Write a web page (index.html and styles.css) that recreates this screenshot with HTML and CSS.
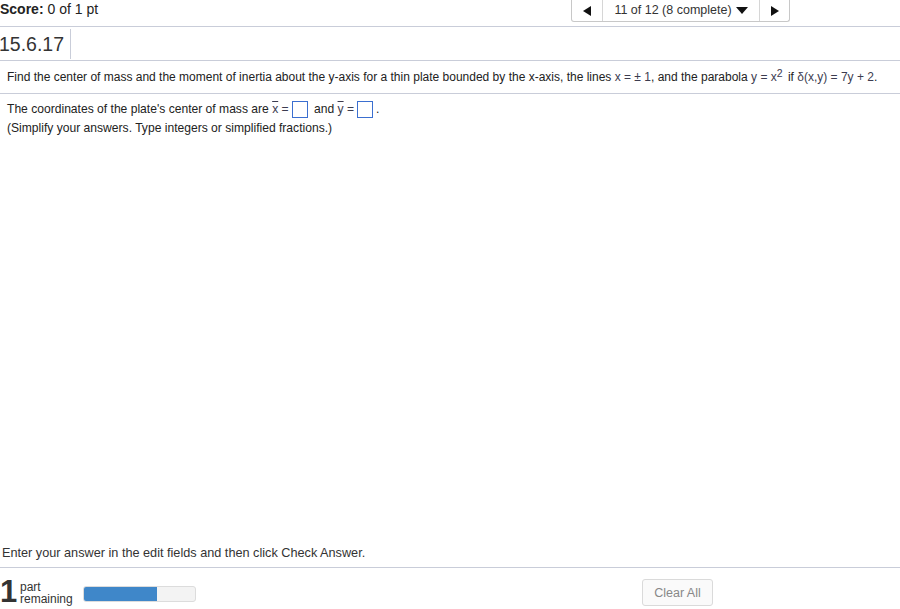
FILE: index.html
```html
<!DOCTYPE html>
<html>
<head>
<meta charset="utf-8">
<link rel="stylesheet" href="styles.css">
</head>
<body>
<div class="page">
  <div class="header">
    <div class="score"><b>Score:</b> 0 of 1 pt</div>
    <div class="nav">
      <div class="navbtn prev"><span class="tri-left"></span></div>
      <div class="navbtn mid">11 of 12 (8 complete)<span class="tri-down"></span></div>
      <div class="navbtn next"><span class="tri-right"></span></div>
    </div>
  </div>
  <div class="titlerow">
    <div class="qnum">15.6.17</div>
  </div>
  <div class="question">Find the center of mass and the moment of inertia about the y-axis for a thin plate bounded by the x-axis, the lines <span class="m">x = ± 1</span>, and the parabola <span class="m">y = x<sup>2</sup></span> if <span class="m">δ(x,y) = 7y + 2</span>.</div>
  <div class="answer">
    <div class="line1">The coordinates of the plate's center of mass are <span class="m"><span class="bar">x</span> =</span><span class="box"></span> and <span class="m"><span class="bar">y</span> =</span><span class="box"></span>.</div>
    <div class="line2">(Simplify your answers. Type integers or simplified fractions.)</div>
  </div>
  <div class="instr">Enter your answer in the edit fields and then click Check Answer.</div>
  <div class="footer">
    <div class="parts">
      <div class="bignum">1</div>
      <div class="partlbl">part<br>remaining</div>
      <div class="progress"><div class="fill" style="width:66%"></div></div>
    </div>
    <div class="clear">Clear All</div>
  </div>
</div>
</body>
</html>
```
FILE: styles.css
```css
html, body { margin: 0; padding: 0; background: #fff; }
body { font-family: "Liberation Sans", Arial, sans-serif; color: #222; }
.page { width: 900px; height: 609px; display: flex; flex-direction: column; overflow: hidden; }

.header { height: 26px; border-bottom: 1px solid #c9cdd9; display: flex; justify-content: space-between; align-items: flex-start; padding-right: 110px; }
.score { font-size: 14px; line-height: 18px; color: #222; }
.score b { font-weight: bold; }
.nav { display: flex; height: 22px; border: 1px solid #c8c8c8; border-top: none; border-radius: 0 0 3px 3px; box-sizing: border-box; }
.navbtn { display: flex; align-items: center; justify-content: center; color: #333; font-size: 12.5px; height: 21px; }
.prev { width: 30px; border-right: 1px solid #d6d6d6; }
.mid { width: 157px; border-right: 1px solid #d6d6d6; gap: 4px; padding-bottom: 1px; box-sizing: border-box; }
.next { width: 29px; }
.tri-left { width: 0; height: 0; border-top: 5px solid transparent; border-bottom: 5px solid transparent; border-right: 8px solid #111; }
.tri-right { width: 0; height: 0; border-top: 5px solid transparent; border-bottom: 5px solid transparent; border-left: 8px solid #111; }
.tri-down { width: 0; height: 0; border-left: 6px solid transparent; border-right: 6px solid transparent; border-top: 7px solid #111; margin-top: 1px; }

.titlerow { height: 33px; border-bottom: 1px solid #c9cdd9; display: flex; align-items: center; }
.qnum { font-size: 19.5px; color: #333; height: 30px; line-height: 30px; padding-right: 6px; border-right: 1px solid #c9cdd9; margin-left: -1px; margin-top: 1px; }

.question { font-size: 12px; line-height: 16px; padding: 8px 7px 8px 7px; border-bottom: 1px solid #c9cdd9; }
.m { color: #3c3c50; }
sup { font-size: 10.5px; line-height: 0; vertical-align: 4px; margin-right: 2px; }

.answer { flex: 1; padding: 6px 7px 0 7px; font-size: 12.1px; }
.line1 { line-height: 18px; display: flex; align-items: center; white-space: pre; }
.line1 .m { margin: 0 2px 0 0; }
.bar { text-decoration: overline; }
.box { display: inline-block; width: 14px; height: 15px; border: 1px solid #3b6fd0; margin: 0 3px 0 1px; }
.line2 { line-height: 18px; margin-top: 1px; }

.instr { font-size: 12.7px; color: #333; padding: 0 2px; line-height: 16px; height: 22px; border-bottom: 1px solid #c9cdd9; }

.footer { height: 41px; display: flex; justify-content: space-between; align-items: flex-start; padding-right: 187px; }
.parts { display: flex; align-items: flex-start; }
.bignum { font-size: 31px; font-weight: bold; line-height: 28px; color: #333; height: 28px; margin-top: 10px; width: 18px; }
.partlbl { font-size: 12px; line-height: 12px; color: #333; margin-top: 13px; width: 63px; margin-left: 2px; }
.progress { width: 111px; height: 14px; background: #f3f3f3; border: 1px solid #dcdcdc; border-radius: 3px; overflow: hidden; margin-top: 18px; }
.fill { height: 100%; background: #3f87c9; }
.clear { width: 69px; height: 25px; border: 1px solid #dadada; border-radius: 3px; background: #fafafa; color: #888; font-size: 12.5px; display: flex; align-items: center; justify-content: center; margin-top: 11px; }
```
